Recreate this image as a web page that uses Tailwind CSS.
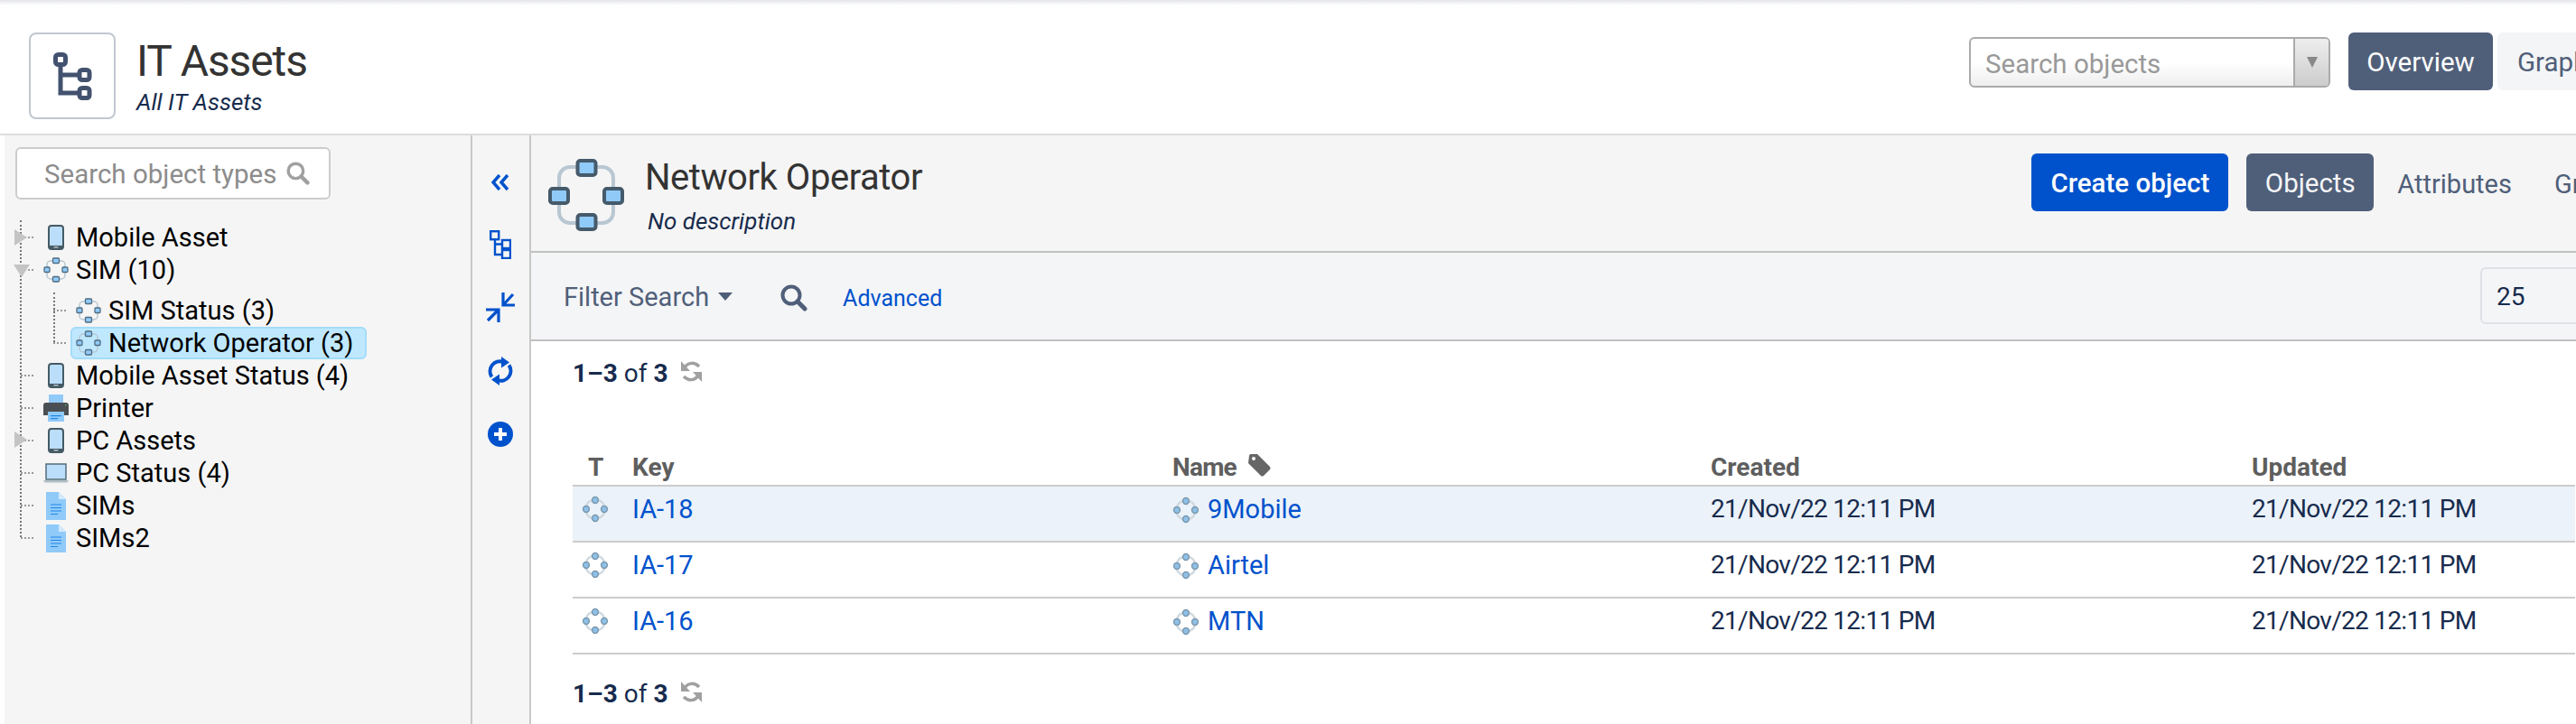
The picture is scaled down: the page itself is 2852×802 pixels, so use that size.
<!DOCTYPE html>
<html lang="en">
<head>
    <meta charset="UTF-8">
    <title>IT Assets</title>
    <script src="https://cdn.jsdelivr.net/npm/@tailwindcss/browser@4"></script>
</head>
<body class="bg-white font-['Roboto',sans-serif] overflow-hidden">
    <svg class="hidden" xmlns="http://www.w3.org/2000/svg">
        <symbol id="net" viewBox="0 0 84 80">
            <rect x="12" y="9" width="60" height="62" rx="12" fill="none" stroke="#b8c7d1" stroke-width="4"/>
            <rect x="32.5" y="2" width="20" height="16" rx="3" fill="#90caf9" stroke="#455a6b" stroke-width="4"/>
            <rect x="2" y="33" width="20" height="16" rx="3" fill="#90caf9" stroke="#455a6b" stroke-width="4"/>
            <rect x="62" y="33" width="20" height="16" rx="3" fill="#90caf9" stroke="#455a6b" stroke-width="4"/>
            <rect x="32.5" y="62" width="20" height="16" rx="3" fill="#90caf9" stroke="#455a6b" stroke-width="4"/>
        </symbol>
        <symbol id="net-tree" viewBox="0 0 28 28">
            <rect x="4" y="4" width="20" height="20" rx="4" fill="none" stroke="#b8c7d1" stroke-width="1.5"/>
            <rect x="10.5" y="1" width="7" height="5.5" rx="1" fill="#90caf9" stroke="#4f6b80" stroke-width="1.3"/>
            <rect x="1" y="11" width="6" height="5.5" rx="1" fill="#90caf9" stroke="#4f6b80" stroke-width="1.3"/>
            <rect x="21" y="11" width="6" height="5.5" rx="1" fill="#90caf9" stroke="#4f6b80" stroke-width="1.3"/>
            <rect x="10.5" y="21.5" width="7" height="5.5" rx="1" fill="#90caf9" stroke="#4f6b80" stroke-width="1.3"/>
        </symbol>
        <symbol id="net-row" viewBox="0 0 30 30">
            <rect x="5" y="5" width="20" height="20" rx="8" fill="none" stroke="#d0d9df" stroke-width="2.5"/>
            <circle cx="15" cy="5" r="3.4" fill="#8fc1e8" stroke="#7b98ae" stroke-width="1.5"/>
            <circle cx="5" cy="15" r="3.4" fill="#8fc1e8" stroke="#7b98ae" stroke-width="1.5"/>
            <circle cx="25" cy="15" r="3.4" fill="#8fc1e8" stroke="#7b98ae" stroke-width="1.5"/>
            <circle cx="15" cy="25" r="3.4" fill="#8fc1e8" stroke="#7b98ae" stroke-width="1.5"/>
        </symbol>
        <symbol id="phone" viewBox="0 0 18 28">
            <rect x="1" y="1" width="16" height="26" rx="3" fill="#bbdefb" stroke="#455a64" stroke-width="2"/>
            <rect x="1" y="23" width="16" height="4" fill="#455a64"/>
            <rect x="6.5" y="24.2" width="5" height="1.2" fill="#cfd8dc"/>
        </symbol>
        <symbol id="printer" viewBox="0 0 28 30">
            <rect x="6" y="0" width="16" height="10" fill="#90caf9"/>
            <path d="M3 9h22a3 3 0 0 1 3 3v11H0V12a3 3 0 0 1 3-3z" fill="#4a4f54"/>
            <rect x="24" y="11" width="1.5" height="1.5" fill="#4caf50"/>
            <rect x="5" y="19" width="18" height="11" fill="#90caf9"/>
            <rect x="8" y="23" width="12" height="1.2" fill="#1e88e5"/>
            <rect x="8" y="26" width="8" height="1.2" fill="#1e88e5"/>
        </symbol>
        <symbol id="laptop" viewBox="0 0 28 22">
            <rect x="3" y="1" width="22" height="17" fill="#bbdefb" stroke="#546e7a" stroke-width="1.5"/>
            <path d="M0 19h28l-1.5 2.5H1.5z" fill="#b0bec5"/>
        </symbol>
        <symbol id="doc" viewBox="0 0 22 31">
            <path d="M0 0h14l8 8v23H0z" fill="#90caf9"/>
            <path d="M14 0l8 8h-8z" fill="#d3eafc"/>
            <path d="M5 14h12M5 17.5h12M5 21h12M5 24.5h8" stroke="#1e88e5" stroke-width="1.2"/>
        </symbol>
        <symbol id="sync" viewBox="0 0 28 32">
            <path d="M4.5 22.5A11 11 0 0 1 17 5.8" fill="none" stroke="currentColor" stroke-width="4"/>
            <path d="M15 0l9 6.5-9 6z" fill="currentColor"/>
            <path d="M23.5 9.5A11 11 0 0 1 11 26.2" fill="none" stroke="currentColor" stroke-width="4"/>
            <path d="M13 32l-9-6.5 9-6z" fill="currentColor"/>
        </symbol>
        <symbol id="sync-gray" viewBox="0 0 25 27">
            <path d="M1 2v11h10z" fill="currentColor"/>
            <path d="M5 9C9 3 16 3 21 8" fill="none" stroke="currentColor" stroke-width="3.5"/>
            <path d="M24 25V14H14z" fill="currentColor"/>
            <path d="M20 18C16 24 9 24 4 19" fill="none" stroke="currentColor" stroke-width="3.5"/>
        </symbol>
        <symbol id="magnifier" viewBox="0 0 30 30">
            <circle cx="12" cy="12" r="9.5" fill="none" stroke="currentColor" stroke-width="4"/>
            <path d="M19 19l8 8" stroke="currentColor" stroke-width="5" stroke-linecap="round"/>
        </symbol>
    </svg>

    <div class="w-[2852px] h-[802px] overflow-hidden flex flex-col">
        <!-- top header -->
        <header class="h-[150px] shrink-0 border-b-2 border-[#dddddd] bg-gradient-to-b from-[#e3e5ec] from-0% via-white via-[4%] to-white flex items-start">
            <div class="ml-[32px] mt-[36px] w-[96px] h-[96px] rounded-lg border-2 border-[#c1c7d0] flex items-center justify-center">
                <svg width="43" height="53" viewBox="0 0 43 53" fill="none" stroke="#42526e" stroke-width="5">
                    <rect x="2.5" y="2.5" width="11" height="11" rx="3"/>
                    <rect x="29" y="19.5" width="11" height="11" rx="3"/>
                    <rect x="29" y="39.5" width="11" height="11" rx="3"/>
                    <path d="M8 14v31h21M8 25h21"/>
                </svg>
            </div>
            <div class="ml-[23px] mt-[40px]">
                <h1 class="text-[48px] leading-[56px] tracking-[-1.1px] text-[#333333]">IT Assets</h1>
                <p class="mt-[1px] text-[26px] leading-[32px] italic text-[#172b4d]">All IT Assets</p>
            </div>
            <div class="ml-auto mr-[-33px] mt-[36px] flex items-start">
                <div class="mt-[5px] w-[400px] h-[56px] border-2 border-[#aaaaaa] rounded-md bg-gradient-to-b from-white from-50% to-[#eeeeee] flex overflow-hidden">
                    <span class="flex-1 pl-[16px] pt-[2px] text-[29.5px] leading-[52px] text-[#999999]">Search objects</span>
                    <span class="w-[39px] border-l-2 border-[#aaaaaa] bg-gradient-to-b from-[#eeeeee] to-[#cccccc] flex items-center justify-center">
                        <svg width="14" height="14" viewBox="0 0 14 14"><path d="M1 1h12L7 13z" fill="#888888"/></svg>
                    </span>
                </div>
                <button class="ml-[20px] pt-[2px] w-[160px] h-[64px] rounded-md bg-[#505f79] text-white text-[29.5px]">Overview</button>
                <button class="ml-[5px] pt-[2px] w-[120px] h-[64px] rounded-md bg-[#f4f5f7] text-[#505f79] text-[29.5px] text-left pl-[22px]">Graph</button>
            </div>
        </header>

        <div class="flex-1 flex pl-[5px] min-h-0">
            <!-- object type tree -->
            <aside class="w-[518px] shrink-0 bg-[#f5f5f5] border-r-2 border-[#c8c8c8]">
                <div class="ml-[12px] mt-[13px] w-[349px] h-[58px] bg-white border-2 border-[#cccccc] rounded-md flex items-center pl-[30px]">
                    <span class="pt-[2px] text-[29.5px] text-[#8c8c8c]">Search object types</span>
                    <svg class="ml-[11px] text-[#a0a0a0]" width="26" height="26"><use href="#magnifier"/></svg>
                </div>
                <div class="relative mt-[24px] text-[29px] text-black">
                    <div class="absolute left-[17px] top-[-1px] h-[351px] border-l-2 border-dotted border-[#777777]"></div>
                    <div class="absolute left-[54px] top-[79px] h-[55px] border-l-2 border-dotted border-[#777777]"></div>
                    <div class="absolute left-[11px] top-[9px] w-0 h-0 border-y-[9px] border-y-transparent border-l-[14px] border-l-[#c4c4c4]"></div>
                    <div class="absolute left-[10px] top-[48px] w-0 h-0 border-x-[9px] border-x-transparent border-t-[14px] border-t-[#c4c4c4]"></div>
                    <div class="absolute left-[11px] top-[233px] w-0 h-0 border-y-[9px] border-y-transparent border-l-[14px] border-l-[#c4c4c4]"></div>

                    <div class="h-[36px] flex items-center pl-[18px]"><span class="w-[14px] border-t-2 border-dotted border-[#999999]"></span><svg class="ml-[16px] mr-[5px]" width="18" height="28"><use href="#phone"/></svg><span class="ml-[8px] pt-[2px]">Mobile Asset</span></div>
                    <div class="h-[36px] flex items-center pl-[18px]"><span class="w-[14px] border-t-2 border-dotted border-[#999999]"></span><svg class="ml-[11px]" width="28" height="28"><use href="#net-tree"/></svg><span class="ml-[8px] pt-[2px]">SIM (10)</span></div>
                    <div class="mt-[9px] h-[36px] flex items-center pl-[54px]"><span class="w-[14px] border-t-2 border-dotted border-[#999999]"></span><svg class="ml-[11px]" width="28" height="28"><use href="#net-tree"/></svg><span class="ml-[8px] pt-[2px]">SIM Status (3)</span></div>
                    <div class="h-[36px] flex items-center pl-[54px]">
                        <span class="w-[14px] border-t-2 border-dotted border-[#999999]"></span>
                        <div class="ml-[5px] h-[36px] w-[328px] flex items-center pl-[4px] bg-[#bfe8ff] border-2 border-[#a3dcfa] rounded-md"><svg class="shrink-0" width="28" height="28"><use href="#net-tree"/></svg><span class="ml-[8px] pt-[2px]">Network Operator (3)</span></div>
                    </div>
                    <div class="h-[36px] flex items-center pl-[18px]"><span class="w-[14px] border-t-2 border-dotted border-[#999999]"></span><svg class="ml-[16px] mr-[5px]" width="18" height="28"><use href="#phone"/></svg><span class="ml-[8px] pt-[2px]">Mobile Asset Status (4)</span></div>
                    <div class="h-[36px] flex items-center pl-[18px]"><span class="w-[14px] border-t-2 border-dotted border-[#999999]"></span><svg class="ml-[11px]" width="28" height="30"><use href="#printer"/></svg><span class="ml-[8px] pt-[2px]">Printer</span></div>
                    <div class="h-[36px] flex items-center pl-[18px]"><span class="w-[14px] border-t-2 border-dotted border-[#999999]"></span><svg class="ml-[16px] mr-[5px]" width="18" height="28"><use href="#phone"/></svg><span class="ml-[8px] pt-[2px]">PC Assets</span></div>
                    <div class="h-[36px] flex items-center pl-[18px]"><span class="w-[14px] border-t-2 border-dotted border-[#999999]"></span><svg class="ml-[11px]" width="28" height="22"><use href="#laptop"/></svg><span class="ml-[8px] pt-[2px]">PC Status (4)</span></div>
                    <div class="h-[36px] flex items-center pl-[18px]"><span class="w-[14px] border-t-2 border-dotted border-[#999999]"></span><svg class="ml-[14px] mr-[3px]" width="22" height="31"><use href="#doc"/></svg><span class="ml-[8px] pt-[2px]">SIMs</span></div>
                    <div class="h-[36px] flex items-center pl-[18px]"><span class="w-[14px] border-t-2 border-dotted border-[#999999]"></span><svg class="ml-[14px] mr-[3px]" width="22" height="31"><use href="#doc"/></svg><span class="ml-[8px] pt-[2px]">SIMs2</span></div>
                </div>
            </aside>

            <!-- tool strip -->
            <div class="w-[65px] shrink-0 bg-[#f5f5f5] border-r-2 border-[#c8c8c8] flex flex-col items-center pr-[2px] text-[#0052cc]">
                <svg class="mt-[43px]" width="20" height="18" viewBox="0 0 20 18" fill="none" stroke="currentColor" stroke-width="3.5"><path d="M9 1L2 9l7 8M18 1l-7 8 7 8"/></svg>
                <svg class="mt-[44px]" width="24" height="32" viewBox="0 0 24 32" fill="none" stroke="currentColor" stroke-width="2.4"><rect x="1.2" y="1.2" width="9" height="9"/><rect x="14" y="11" width="9" height="9"/><rect x="14" y="22" width="9" height="9"/><path d="M6 10v17h8M6 15.5h8"/></svg>
                <svg class="mt-[37px]" width="32" height="33" viewBox="0 0 32 33" fill="none" stroke="currentColor" stroke-width="3.2"><path d="M19 0v14h13M19 14L30 2M0 19h14v14M14 19L2 31"/></svg>
                <svg class="mt-[38px]" width="28" height="32"><use href="#sync"/></svg>
                <svg class="mt-[40px]" width="28" height="28" viewBox="0 0 28 28"><circle cx="14" cy="14" r="14" fill="currentColor"/><path d="M14 7v14M7 14h14" stroke="#ffffff" stroke-width="4"/></svg>
            </div>

            <main class="flex-1 min-w-0 flex flex-col">
                <div class="h-[130px] shrink-0 bg-[#f5f5f5] border-b-2 border-[#c0c0c0] flex items-start">
                    <svg class="ml-[19px] mt-[26px]" width="84" height="80"><use href="#net"/></svg>
                    <div class="ml-[23px] mt-[23px]">
                        <h2 class="text-[40px] leading-[48px] tracking-[-0.45px] text-[#333333]">Network Operator</h2>
                        <p class="ml-[3px] mt-[8px] text-[26px] leading-[32px] italic text-[#172b4d]">No description</p>
                    </div>
                    <button class="ml-auto mt-[20px] pt-[2px] w-[218px] h-[64px] rounded-md bg-[#0052cc] text-white text-[29.5px] font-medium">Create object</button>
                    <button class="ml-[20px] mt-[20px] pt-[2px] w-[141px] h-[64px] rounded-md bg-[#505f79] text-[#f4f5f7] text-[29.5px]">Objects</button>
                    <span class="ml-[26px] mt-[22px] text-[29px] leading-[64px] text-[#505f79]">Attributes</span>
                    <span class="ml-[47px] mr-[-53px] mt-[22px] text-[29px] leading-[64px] text-[#505f79]">Graph</span>
                </div>
                <div class="h-[98px] shrink-0 bg-[#f4f5f7] border-b-2 border-[#c0c0c0] flex items-center">
                    <span class="ml-[36px] mt-[4px] text-[29px] text-[#505f79]">Filter Search</span>
                    <svg class="ml-[10px]" width="16" height="9" viewBox="0 0 16 9"><path d="M0 0h16L8 9z" fill="#505f79"/></svg>
                    <svg class="ml-[53px] mt-[4px] text-[#505f79]" width="30" height="30"><use href="#magnifier"/></svg>
                    <a class="ml-[39px] mt-[6px] text-[25px] text-[#0052cc]">Advanced</a>
                    <div class="ml-auto mr-[-40px] mt-[-2px] w-[146px] h-[63px] bg-[#f4f5f7] border-2 border-[#dfe1e6] rounded-md pl-[16px] text-[28px] leading-[61px] text-[#172b4d]">25</div>
                </div>
                <div class="flex-1 bg-white pl-[46px] min-h-0">
                    <div class="mt-[16px] flex items-center h-[40px] text-[28px] text-[#172b4d]">
                        <span><b class="font-bold">1–3</b> of <b class="font-bold">3</b></span>
                        <svg class="ml-[14px] mt-[-6px] text-[#a0a0a0] blur-[0.5px]" width="25" height="27"><use href="#sync-gray"/></svg>
                    </div>
                    <table class="mt-[64px] table-fixed w-[2217px] text-[29px] text-left">
                        <colgroup>
                            <col class="w-[66px]"><col class="w-[598px]"><col class="w-[596px]"><col class="w-[599px]"><col class="w-[358px]">
                        </colgroup>
                        <thead class="text-[28px] text-[#5e5e5e]">
                            <tr class="h-[38px] border-b-2 border-[#cccccc]">
                                <th class="pl-[17px] pt-[1px] font-bold align-top leading-[38px]">T</th>
                                <th class="pt-[1px] font-bold align-top leading-[38px]">Key</th>
                                <th class="pt-[1px] font-bold align-top leading-[38px]"><span class="inline-flex items-center gap-[12px]"><span class="tracking-[-0.8px]">Name</span> <svg class="mt-[-6px]" width="26" height="26" viewBox="0 0 26 26"><path d="M2 3Q2 1 4 1H11L25 15Q26 17 25 18L18 25Q16 26 15 25L1 11Z" fill="#666666"/><circle cx="7" cy="6" r="2" fill="#ffffff"/></svg></span></th>
                                <th class="pt-[1px] font-bold align-top leading-[38px]">Created</th>
                                <th class="pt-[1px] font-bold align-top leading-[38px]">Updated</th>
                            </tr>
                        </thead>
                        <tbody class="text-[#172b4d]">
                            <tr class="h-[62px] bg-[#ebf2f9] border-b-2 border-[#cccccc]">
                                <td class="align-top pl-[10px] pt-[10px]"><svg width="30" height="30"><use href="#net-row"/></svg></td>
                                <td class="align-top leading-[40px] pt-[5px] text-[#0052cc]">IA-18</td>
                                <td class="align-top leading-[40px] pt-[5px] text-[#0052cc]"><span class="flex items-center"><svg class="mt-[2px] mr-[9px]" width="30" height="30"><use href="#net-row"/></svg>9Mobile</span></td>
                                <td class="align-top leading-[40px] pt-[5px] text-[28px] tracking-[-0.7px]">21/Nov/22 12:11 PM</td>
                                <td class="align-top leading-[40px] pt-[5px] text-[28px] tracking-[-0.7px]">21/Nov/22 12:11 PM</td>
                            </tr>
                            <tr class="h-[62px] border-b-2 border-[#cccccc]">
                                <td class="align-top pl-[10px] pt-[10px]"><svg width="30" height="30"><use href="#net-row"/></svg></td>
                                <td class="align-top leading-[40px] pt-[5px] text-[#0052cc]">IA-17</td>
                                <td class="align-top leading-[40px] pt-[5px] text-[#0052cc]"><span class="flex items-center"><svg class="mt-[2px] mr-[9px]" width="30" height="30"><use href="#net-row"/></svg>Airtel</span></td>
                                <td class="align-top leading-[40px] pt-[5px] text-[28px] tracking-[-0.7px]">21/Nov/22 12:11 PM</td>
                                <td class="align-top leading-[40px] pt-[5px] text-[28px] tracking-[-0.7px]">21/Nov/22 12:11 PM</td>
                            </tr>
                            <tr class="h-[62px] border-b-2 border-[#cccccc]">
                                <td class="align-top pl-[10px] pt-[10px]"><svg width="30" height="30"><use href="#net-row"/></svg></td>
                                <td class="align-top leading-[40px] pt-[5px] text-[#0052cc]">IA-16</td>
                                <td class="align-top leading-[40px] pt-[5px] text-[#0052cc]"><span class="flex items-center"><svg class="mt-[2px] mr-[9px]" width="30" height="30"><use href="#net-row"/></svg>MTN</span></td>
                                <td class="align-top leading-[40px] pt-[5px] text-[28px] tracking-[-0.7px]">21/Nov/22 12:11 PM</td>
                                <td class="align-top leading-[40px] pt-[5px] text-[28px] tracking-[-0.7px]">21/Nov/22 12:11 PM</td>
                            </tr>
                        </tbody>
                    </table>
                    <div class="mt-[24px] flex items-center h-[40px] text-[28px] text-[#172b4d]">
                        <span><b class="font-bold">1–3</b> of <b class="font-bold">3</b></span>
                        <svg class="ml-[14px] mt-[-6px] text-[#a0a0a0] blur-[0.5px]" width="25" height="27"><use href="#sync-gray"/></svg>
                    </div>
                </div>
            </main>
        </div>
    </div>
</body>
</html>
